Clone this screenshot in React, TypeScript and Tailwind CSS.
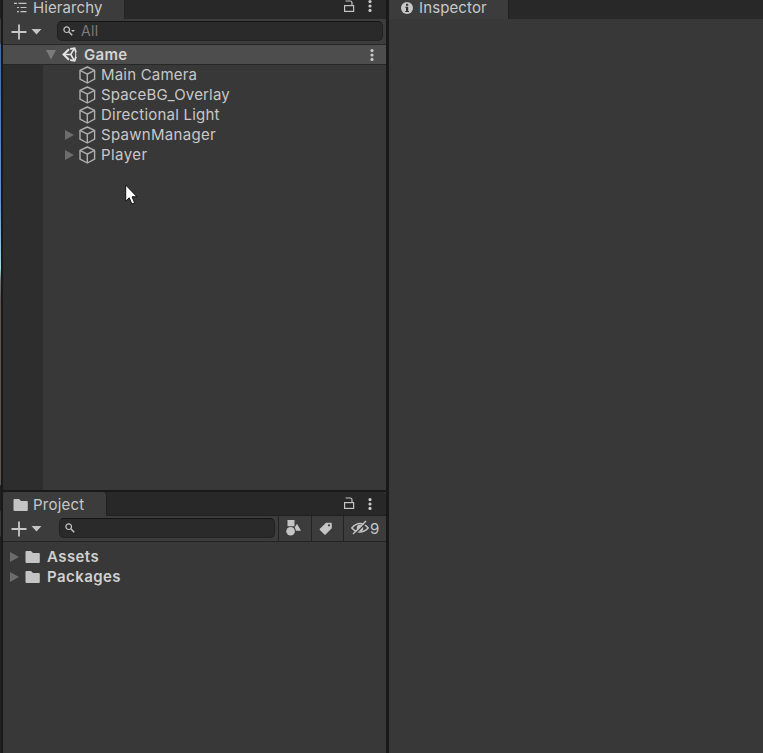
import React from 'react';

type IconProps = { className?: string };

const Cube = () => (
  <svg className="h-[18px] w-[18px] shrink-0" viewBox="0 0 18 18" fill="none" stroke="#b0b0b0" strokeWidth="1.4" strokeLinejoin="round">
    <path d="M9.3 1 16.6 4.4V13.2L9.3 17 2 13.2V4.4Z" />
    <path d="M2 4.4 9.3 8.1 16.6 4.4M9.3 8.1V17" />
  </svg>
);

const Folder = ({ className = '' }: IconProps) => (
  <svg className={`h-3 w-[15px] shrink-0 ${className}`} viewBox="0 0 15 12" fill="#c4c4c4">
    <path d="M.5 1Q.5 0 1.5 0H6L8 2H13.8Q14.8 2 14.8 3V11Q14.8 12 13.8 12H1.5Q.5 12 .5 11Z" />
  </svg>
);

const Lock = () => (
  <svg className="h-[13px] w-[11px]" viewBox="0 0 11 13" fill="none" stroke="#c4c4c4" strokeWidth="1.2">
    <rect x="0.6" y="5.6" width="9" height="5.8" />
    <path d="M2.2 1.6V1H6.2Q8 1 8 3V5.6" />
  </svg>
);

const Dots = () => (
  <svg className="h-3 w-1" viewBox="0 0 4 12" fill="#c8c8c8">
    <circle cx="2" cy="1.6" r="1.6" />
    <circle cx="2" cy="6" r="1.6" />
    <circle cx="2" cy="10.4" r="1.6" />
  </svg>
);

const AddMenu = () => (
  <svg className="h-4 w-8 shrink-0" viewBox="0 0 32 16">
    <path d="M8 .5V15.5M.5 8H15.5" stroke="#c8c8c8" strokeWidth="1.8" />
    <path d="M20.5 5H30.5L25.5 10.5Z" fill="#c4c4c4" />
  </svg>
);

const Search = ({ menu = false }: { menu?: boolean }) => (
  <svg className="h-[11px] w-3 shrink-0" viewBox="0 0 12 11" fill="none" stroke="#c4c4c4">
    <circle cx="3.7" cy="3.7" r="2.8" strokeWidth="1.2" />
    <path d="M5.8 5.8 9.2 9.3" strokeWidth="1.5" />
    {menu && <path d="M8 4H12L10 6Z" fill="#c4c4c4" stroke="none" />}
  </svg>
);

const Fold = ({ open = false }: { open?: boolean }) => (
  <svg className="h-[10px] w-[10px] shrink-0" viewBox="0 0 10 10" fill={open ? '#7a7a7a' : '#6c6c6c'}>
    <path d={open ? 'M0 0H10L5 9.5Z' : 'M0 0V10L9 5Z'} />
  </svg>
);

const UnityLogo = () => (
  <svg className="h-[15px] w-[15px] shrink-0" viewBox="0 0 15 15" fill="none" stroke="#e4e4e4" strokeLinejoin="miter">
    <path d="M8.2 2 12.6 1.2 14 5.2M14 9.8 12.6 13.8 8.2 13" strokeWidth="1.8" />
    <path d="M13.7 5V10" strokeWidth="1" />
    <path d="M7 2.2 1.6 7.5 7 12.8" strokeWidth="2.1" />
    <path d="M1.6 7.5H8.8L12 1.8M8.8 7.5 12 13.2" strokeWidth="1.6" />
  </svg>
);

const HierarchyIcon = () => (
  <svg className="h-3 w-[14px]" viewBox="0 0 14 12" stroke="#c4c4c4" strokeWidth="1.2">
    <path d="M0 1.3H3M4.5 1.3H12.5M3 5.5H5M6.5 5.5H12.5M3 9.7H5M6.5 9.7H12.5" />
  </svg>
);

const objects = [
  { name: 'Main Camera', parent: false, tracking: 'tracking-[0.2px]' },
  { name: 'SpaceBG_Overlay', parent: false, tracking: 'tracking-[0.16px]' },
  { name: 'Directional Light', parent: false, tracking: 'tracking-[0.22px]' },
  { name: 'SpawnManager', parent: true, tracking: 'tracking-[0.3px]' },
  { name: 'Player', parent: true, tracking: 'tracking-[0.45px]' },
];

function Hierarchy() {
  return (
    <section className="flex h-[490px] flex-col bg-[#383838]">
      <div className="flex h-[19px] shrink-0 justify-between bg-[#282828]">
        <div className="flex h-[19px] w-[122px] items-start border-r border-[#232323] bg-[#3c3c3c] pl-[11px]">
          <div className="mt-[2px]"><HierarchyIcon /></div>
          <span className="ml-[5px] leading-4 tracking-[0.1px]">Hierarchy</span>
        </div>
        <div className="flex items-start gap-[13px] pr-[14px]">
          <Lock />
          <Dots />
        </div>
      </div>
      <div className="flex h-[25px] shrink-0 items-center bg-[#3c3c3c] pl-2">
        <AddMenu />
        <div className="mb-px ml-[14px] mr-[3px] flex h-5 flex-1 items-center rounded-[5px] border border-[#212121] border-t-[#141414] bg-[#2a2a2a] pl-[5px]">
          <Search menu />
          <span className="ml-[6px] text-[14px] leading-[18px] text-[#7b7b7b]">All</span>
        </div>
      </div>
      <div className="flex h-[21px] shrink-0 items-center border-y border-[#272727] bg-[#4d4d4d] pl-[43px] pr-3">
        <Fold open />
        <div className="ml-[6px]"><UnityLogo /></div>
        <span className="ml-[7px] flex-1 font-semibold leading-5 text-[#d4d4d4]">Game</span>
        <Dots />
      </div>
      <div className="flex flex-1">
        <div className="w-10 bg-[#2d2d2d]" />
        <ul>
          {objects.map(({ name, parent, tracking }) => (
            <li key={name} className="flex h-5 items-center">
              <div className="ml-[22px] flex w-[13px]">{parent && <Fold />}</div>
              <Cube />
              <span className={`ml-[5px] leading-5 ${tracking}`}>{name}</span>
            </li>
          ))}
        </ul>
      </div>
    </section>
  );
}

function Project() {
  return (
    <section className="flex flex-1 flex-col bg-[#383838]">
      <div className="flex h-6 shrink-0 items-stretch justify-between overflow-hidden rounded-t-[4px] bg-[#282828]">
        <div className="flex w-[104px] items-center rounded-t-[4px] border-r border-[#202020] bg-[#3c3c3c] pl-[10px]">
          <Folder className="mt-[2px]" />
          <span className="ml-[5px] mt-[2px] leading-5 tracking-[0.22px]">Project</span>
        </div>
        <div className="flex flex-1 items-center justify-end gap-[13px] border-b border-[#202020] pr-[14px]">
          <Lock />
          <Dots />
        </div>
      </div>
      <div className="flex h-[26px] shrink-0 items-center border-b border-[#232323] bg-[#3c3c3c] pl-2">
        <AddMenu />
        <div className="mb-px ml-4 mr-[3px] flex h-5 flex-1 items-center rounded-[5px] border border-[#212121] border-t-[#141414] bg-[#2a2a2a] pl-[5px]">
          <Search />
        </div>
        <div className="flex h-full w-[33px] items-center border-l border-[#232323] pl-[7px]">
          <svg className="mb-px h-4 w-[15px]" viewBox="0 0 15 16" fill="#c4c4c4">
            <path d="M1.5 0H8.5V6.2H1.5ZM11 3.7 15 10.7H10Q9.4 8.2 8.6 7.4Z" />
            <circle cx="4.6" cy="11.3" r="4.3" />
          </svg>
        </div>
        <div className="flex h-full w-8 items-center border-l border-[#232323] pl-[7px]">
          <svg className="mb-px h-[13px] w-[13px]" viewBox="0 0 13 13" fill="#c4c4c4" fillRule="evenodd">
            <path d="M7 .7H12Q12.8.7 12.8 1.5V6.2L6.6 12.4Q6 13 5.4 12.4L.9 7.9Q.3 7.3.9 6.7ZM10 2.2A1.1 1.1 0 1 0 10 4.4 1.1 1.1 0 1 0 10 2.2Z" />
          </svg>
        </div>
        <div className="flex h-full w-[43px] items-center border-l border-[#232323] pl-[7px]">
          <svg className="mb-px h-4 w-[18px] shrink-0" viewBox="0 0 18 16" fill="none" stroke="#c4c4c4" strokeWidth="1.5">
            <path d="M.8 8Q9-.8 17.2 8 9 16.2.8 8Z" />
            <circle cx="9" cy="8" r="2.5" fill="#c4c4c4" />
            <path d="M3.2 14.8 16.2 1.8" stroke="#3c3c3c" strokeWidth="1.5" />
            <path d="M2 14 15 1" />
          </svg>
          <span className="ml-[1px] leading-5">9</span>
        </div>
      </div>
      <ul className="pt-[5px]">
        {['Assets', 'Packages'].map((name) => (
          <li key={name} className="flex h-5 items-center pl-[7px]">
            <Fold />
            <Folder className="ml-[5px]" />
            <span className="ml-[7px] font-semibold leading-5 tracking-[0.43px] text-[#d0d0d0]">{name}</span>
          </li>
        ))}
      </ul>
    </section>
  );
}

const Cursor = () => (
  <svg className="absolute left-[125px] top-[184px] h-[21px] w-[13px]" viewBox="0 0 13 21">
    <path d="M.7 1V17.2L4.2 13.8 6.9 20 9.6 18.8 7 12.8H12Z" fill="#fff" stroke="#111" strokeWidth="1" />
  </svg>
);

export default function App() {
  return (
    <div className="relative flex h-[753px] w-[763px] overflow-hidden bg-[#191919] font-['Inter',sans-serif] text-[15px] tracking-[0.3px] text-[#c8c8c8]">
      <div className="w-px bg-[linear-gradient(to_bottom,#202020_0_18px,#3c3c3c_19px_43px,#4268a4_45px,#6492cc_200px,#9edbe5_268px,#777_280px,#5c5552_300px_484px,#202020_486px_510px,#383838_512px_535px,#222_537px)]" />
      <main className="ml-[2px] flex w-[383px] flex-col gap-[2px]">
        <Hierarchy />
        <Project />
      </main>
      <section className="ml-[3px] flex flex-1 flex-col bg-[#383838]">
        <div className="flex h-[19px] bg-[#282828]">
          <div className="flex w-[120px] items-start border-r border-[#202020] bg-[#3c3c3c] pl-3">
            <svg className="mt-[2px] h-3 w-3" viewBox="0 0 12 12">
              <circle cx="6" cy="6" r="6" fill="#c8c8c8" />
              <path d="M5 1.8H7.2V3.7H5ZM4.3 4.8H7.2V9H8V10.1H4.2V9H5V5.8H4.3Z" fill="#333" />
            </svg>
            <span className="ml-[6px] leading-4 tracking-[0.12px]">Inspector</span>
          </div>
        </div>
      </section>
      <Cursor />
    </div>
  );
}
